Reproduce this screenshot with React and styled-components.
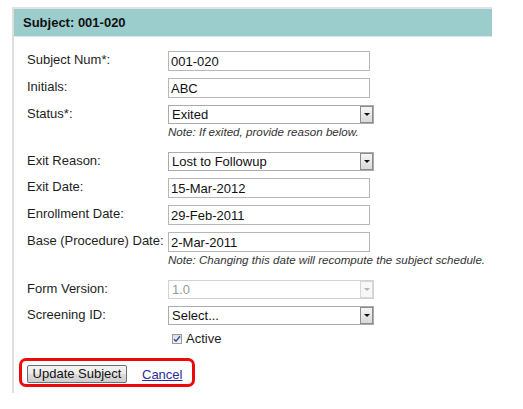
import React from "react";
import styled, { createGlobalStyle } from "styled-components";

const Global = createGlobalStyle`
  html, body { margin: 0; padding: 0; background: #fff; }
  body { font-family: "Liberation Sans", Arial, sans-serif; color: #1e1e1e; }
`;

const Page = styled.div`
  width: 523px;
  height: 409px;
  padding: 7px 0 0 12px;
  box-sizing: border-box;
`;

const Panel = styled.section`
  width: 480px;
  border-top: 2px solid #e2e2e2;
  border-left: 2px solid #dedede;
  box-sizing: border-box;
`;

const Header = styled.h2`
  margin: 0;
  height: 28px;
  line-height: 27px;
  padding-left: 9px;
  background: #9ccdcd;
  border-bottom: 1px solid #d4ebeb;
  box-sizing: border-box;
  font-size: 13px;
  font-weight: bold;
  color: #111;
`;

const Body = styled.div`
  padding: 14px 0 6px 13px;
`;

const Form = styled.div`
  display: grid;
  grid-template-columns: 141px 1fr;
  row-gap: 7px;
`;

const Label = styled.label`
  font-size: 13px;
  line-height: 15px;
  padding-top: 1px;
  white-space: nowrap;
`;

const Field = styled.div`
  display: flex;
  flex-direction: column;
  align-items: flex-start;
`;

const TextInput = styled.input`
  width: 202px;
  height: 20px;
  box-sizing: border-box;
  border: 1px solid #b7b7b7;
  padding: 0 2px;
  margin: 0;
  font-family: "Liberation Sans", Arial, sans-serif;
  font-size: 13px;
  color: #111;
  background: #fff;
  outline: none;
`;

const Select = styled.div`
  position: relative;
  width: 206px;
  height: 19px;
  box-sizing: border-box;
  border: 1px solid ${(p) => (p.$disabled ? "#d2d2d2" : "#ababab")};
  padding: 0 0 0 3px;
  font-size: 13px;
  line-height: 17px;
  color: ${(p) => (p.$disabled ? "#9a9a9a" : "#111")};
  background: #fff;
`;

const Arrow = styled.span`
  position: absolute;
  top: 0;
  right: 0;
  width: 13px;
  height: 17px;
  box-sizing: border-box;
  border: 1px solid ${(p) => (p.$disabled ? "#d8d8d8" : "#8c8c8c")};
  background: ${(p) =>
    p.$disabled ? "#f7f7f7" : "linear-gradient(#f6f6f6, #d9d9d9)"};
  display: flex;
  align-items: center;
  justify-content: center;
  &::after {
    content: "";
    border-left: 3px solid transparent;
    border-right: 3px solid transparent;
    border-top: 3px solid ${(p) => (p.$disabled ? "#b5b5b5" : "#111")};
  }
`;

const Note = styled.div`
  font-size: 11.6px;
  font-style: italic;
  line-height: 14px;
  color: #333;
  margin: 1px 0 6px;
  white-space: nowrap;
`;

const CheckRow = styled.label`
  display: flex;
  align-items: center;
  height: 13px;
  margin-left: 4px;
  font-size: 13px;
  gap: 4px;
`;

const CheckBox = styled.span`
  width: 10px;
  height: 10px;
  box-sizing: border-box;
  border: 1px solid #9a9a9a;
  background: linear-gradient(#dcdcdc, #f6f6f6);
  display: flex;
  align-items: center;
  justify-content: center;
`;

const Actions = styled.div`
  display: inline-flex;
  align-items: center;
  margin: 13px 0 0 -8px;
  padding: 4px 10px 1px 5px;
  border: 3px solid #ee0a0a;
  border-radius: 7px;
  gap: 15px;
`;

const Button = styled.button`
  width: 100px;
  height: 18px;
  padding: 0;
  margin: 0;
  border: 1px solid #707070;
  border-radius: 2px;
  background: linear-gradient(#f3f3f3 0%, #ebebeb 50%, #dcdcdc 51%, #cfcfcf 100%);
  font-family: "Liberation Sans", Arial, sans-serif;
  font-size: 13px;
  line-height: 16px;
  color: #111;
`;

const Link = styled.a`
  font-size: 13px;
  color: #2b2b9e;
  text-decoration: underline;
  cursor: pointer;
`;

function SelectField({ value, disabled }) {
  return (
    <Select $disabled={disabled}>
      {value}
      <Arrow $disabled={disabled} />
    </Select>
  );
}

export default function App() {
  return (
    <Page>
      <Global />
      <Panel>
        <Header>Subject: 001-020</Header>
        <Body>
          <Form>
            <Label>Subject Num*:</Label>
            <Field>
              <TextInput defaultValue="001-020" />
            </Field>

            <Label>Initials:</Label>
            <Field>
              <TextInput defaultValue="ABC" />
            </Field>

            <Label>Status*:</Label>
            <Field>
              <SelectField value="Exited" />
              <Note>Note: If exited, provide reason below.</Note>
            </Field>

            <Label>Exit Reason:</Label>
            <Field>
              <SelectField value="Lost to Followup" />
            </Field>

            <Label>Exit Date:</Label>
            <Field>
              <TextInput defaultValue="15-Mar-2012" />
            </Field>

            <Label>Enrollment Date:</Label>
            <Field>
              <TextInput defaultValue="29-Feb-2011" />
            </Field>

            <Label>Base (Procedure) Date:</Label>
            <Field>
              <TextInput defaultValue="2-Mar-2011" />
              <Note>Note: Changing this date will recompute the subject schedule.</Note>
            </Field>

            <Label>Form Version:</Label>
            <Field>
              <SelectField value="1.0" disabled />
            </Field>

            <Label>Screening ID:</Label>
            <Field>
              <SelectField value="Select..." />
            </Field>

            <span />
            <Field>
              <CheckRow>
                <CheckBox>
                  <svg width="8" height="8" viewBox="0 0 8 8">
                    <path d="M1 4.2 L3 6.3 L7 1.3" fill="none" stroke="#2f4f9e" strokeWidth="1.4" />
                  </svg>
                </CheckBox>
                Active
              </CheckRow>
            </Field>
          </Form>
          <Actions>
            <Button type="button">Update Subject</Button>
            <Link>Cancel</Link>
          </Actions>
        </Body>
      </Panel>
    </Page>
  );
}
